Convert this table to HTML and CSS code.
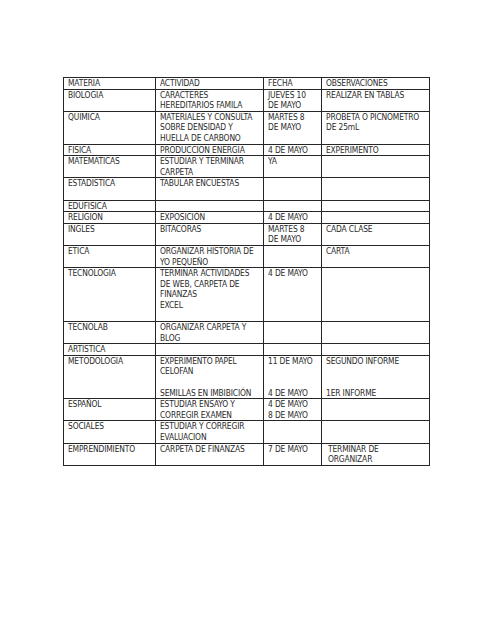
FILE: index.html
```html
<!DOCTYPE html>
<html lang="es">
<head>
<meta charset="utf-8">
<title>Materias</title>
<link rel="stylesheet" href="styles.css">
</head>
<body>
<table class="grid">
  <colgroup>
    <col class="c1"><col class="c2"><col class="c3"><col class="c4">
  </colgroup>
  <tr><td>MATERIA</td><td>ACTIVIDAD</td><td>FECHA</td><td>OBSERVACIONES</td></tr>
  <tr><td>BIOLOGIA</td><td>CARACTERES<br>HEREDITARIOS FAMILA</td><td>JUEVES 10<br>DE MAYO</td><td>REALIZAR EN TABLAS</td></tr>
  <tr><td>QUIMICA</td><td>MATERIALES Y CONSULTA<br>SOBRE DENSIDAD Y<br>HUELLA DE CARBONO</td><td>MARTES 8<br>DE MAYO</td><td>PROBETA O PICNOMETRO<br>DE 25mL</td></tr>
  <tr><td>FISICA</td><td>PRODUCCION ENERGIA</td><td>4 DE MAYO</td><td>EXPERIMENTO</td></tr>
  <tr><td>MATEMATICAS</td><td>ESTUDIAR Y TERMINAR<br>CARPETA</td><td>YA</td><td></td></tr>
  <tr><td>ESTADISTICA</td><td>TABULAR ENCUESTAS<br>&nbsp;</td><td></td><td></td></tr>
  <tr><td>EDUFISICA</td><td></td><td></td><td></td></tr>
  <tr><td>RELIGION</td><td>EXPOSICIÓN</td><td>4 DE MAYO</td><td></td></tr>
  <tr><td>INGLES</td><td>BITACORAS</td><td>MARTES 8<br>DE MAYO</td><td>CADA CLASE</td></tr>
  <tr><td>ETICA</td><td>ORGANIZAR HISTORIA DE<br>YO PEQUEÑO</td><td></td><td>CARTA</td></tr>
  <tr><td>TECNOLOGIA</td><td>TERMINAR ACTIVIDADES<br>DE WEB, CARPETA DE<br>FINANZAS<br>EXCEL<br>&nbsp;</td><td>4 DE MAYO</td><td></td></tr>
  <tr><td>TECNOLAB</td><td>ORGANIZAR CARPETA Y<br>BLOG</td><td></td><td></td></tr>
  <tr><td>ARTISTICA</td><td></td><td></td><td></td></tr>
  <tr><td>METODOLOGIA</td><td>EXPERIMENTO PAPEL<br>CELOFAN<br>&nbsp;<br>SEMILLAS EN IMBIBICIÓN</td><td>11 DE MAYO<br>&nbsp;<br>&nbsp;<br>4 DE MAYO</td><td>SEGUNDO INFORME<br>&nbsp;<br>&nbsp;<br>1ER INFORME</td></tr>
  <tr><td>ESPAÑOL</td><td>ESTUDIAR ENSAYO Y<br>CORREGIR EXAMEN</td><td>4 DE MAYO<br>8 DE MAYO</td><td></td></tr>
  <tr><td>SOCIALES</td><td>ESTUDIAR Y CORREGIR<br>EVALUACION</td><td></td><td></td></tr>
  <tr><td>EMPRENDIMIENTO</td><td>CARPETA DE FINANZAS</td><td>7 DE MAYO</td><td class="indent">TERMINAR DE<br>ORGANIZAR</td></tr>
</table>
</body>
</html>
```

FILE: styles.css
```css
html, body {
  margin: 0;
  padding: 0;
  background: #ffffff;
}

body {
  padding: 77px 0 0 63px;
}

.grid {
  border-collapse: collapse;
  table-layout: fixed;
  width: 366px;
  font-family: "Liberation Sans Narrow", "DejaVu Sans Condensed", "Liberation Sans", sans-serif;
  font-size: 8.4px;
  letter-spacing: -0.15px;
  line-height: 10.6px;
  color: #2a2a2a;
}

.c1 { width: 92px; }
.c2 { width: 108px; }
.c3 { width: 58px; }
.c4 { width: 108px; }

.grid td {
  border: 1px solid #262626;
  padding: 0 0 0 4px;
  vertical-align: top;
  white-space: nowrap;
  overflow: hidden;
}

.grid td.indent {
  padding-left: 6px;
}
```
